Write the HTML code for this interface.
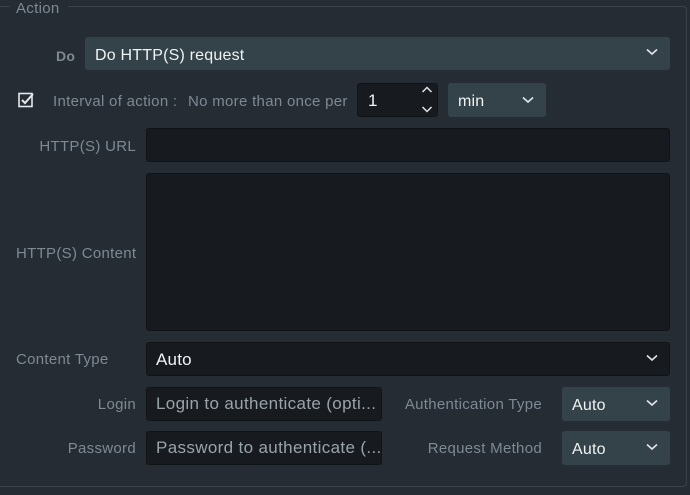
<!DOCTYPE html>
<html><head><meta charset="utf-8"><style>
body{margin:0;width:690px;height:495px;background:#262c33;font-family:"Liberation Sans",sans-serif;position:relative;overflow:hidden}
.a{position:absolute}
.lbl{position:absolute;color:#7d8993;font-size:15px;line-height:18px;white-space:nowrap;letter-spacing:0.3px;margin-top:1px}
.r{text-align:right}
.in{position:absolute;background:#171b1f;border:1px solid #111417;border-radius:3px;box-sizing:border-box}
.sel{position:absolute;background:#34434a;border-radius:3px;box-sizing:border-box}
.t{position:absolute;color:#f0f2f3;font-size:16px;line-height:20px;white-space:nowrap;letter-spacing:0.2px;margin-top:1px}
.ph{position:absolute;color:#9aa3aa;font-size:17px;line-height:20px;white-space:nowrap;letter-spacing:0.35px}
svg.chev{position:absolute}
</style></head><body>
<div class="a" style="left:0;top:6px;width:686px;height:479px;border:1px solid #39424a;border-left:none;border-radius:0 4px 4px 0"></div>
<div class="a" style="left:10px;top:0;width:58px;height:14px;background:#262c33"></div>
<div class="lbl" style="left:16px;top:-1px">Action</div>

<div class="lbl" style="left:56px;top:46px;font-weight:bold;font-size:14px">Do</div>
<div class="sel" style="left:85px;top:37px;width:585px;height:33px"></div>
<div class="t" style="left:95px;top:45px">Do HTTP(S) request</div>
<svg class="chev" style="left:646px;top:48px" width="12" height="8"><path d="M1 1.5L6 6L11 1.5" stroke="#e0e4e6" stroke-width="1.6" fill="none"/></svg>

<svg class="a" style="left:18px;top:92px" width="17" height="16"><rect x="1" y="1.5" width="13" height="13" stroke="#e6e9eb" stroke-width="1.6" fill="none"/><path d="M4 8L7 11L15 2" stroke="#e6e9eb" stroke-width="2" fill="none"/></svg>
<div class="lbl" style="left:53px;top:92px">Interval of action :</div>
<div class="lbl" style="left:188px;top:92px">No more than once per</div>
<div class="in" style="left:357px;top:83px;width:81px;height:34px"></div>
<div class="t" style="left:368px;top:90px;font-size:17px">1</div>
<svg class="a" style="left:421px;top:85px" width="12" height="30"><path d="M1.5 7L6 2.5L10.5 7M1.5 22L6 26.5L10.5 22" stroke="#e0e4e6" stroke-width="1.5" fill="none"/></svg>
<div class="sel" style="left:448px;top:83px;width:98px;height:34px"></div>
<div class="t" style="left:458px;top:91px">min</div>
<svg class="chev" style="left:522px;top:96px" width="12" height="8"><path d="M1 1.5L6 6L11 1.5" stroke="#e0e4e6" stroke-width="1.6" fill="none"/></svg>

<div class="lbl r" style="left:0;width:136px;top:137px">HTTP(S) URL</div>
<div class="in" style="left:146px;top:128px;width:524px;height:34px"></div>
<div class="lbl" style="left:16px;top:244px">HTTP(S) Content</div>
<div class="in" style="left:146px;top:173px;width:524px;height:158px"></div>

<div class="lbl" style="left:16px;top:350px">Content Type</div>
<div class="in" style="left:146px;top:342px;width:524px;height:34px"></div>
<div class="t" style="left:156px;top:349px;font-size:17px">Auto</div>
<svg class="chev" style="left:646px;top:354px" width="12" height="8"><path d="M1 1.5L6 6L11 1.5" stroke="#e0e4e6" stroke-width="1.6" fill="none"/></svg>

<div class="lbl r" style="left:0;width:136px;top:395px">Login</div>
<div class="in" style="left:146px;top:387px;width:236px;height:34px;overflow:hidden"><div class="ph" style="left:9px;top:6px">Login to authenticate (opti...</div></div>
<div class="lbl r" style="left:300px;width:242px;top:395px">Authentication Type</div>
<div class="sel" style="left:562px;top:387px;width:108px;height:34px"></div>
<div class="t" style="left:572px;top:395px">Auto</div>
<svg class="chev" style="left:646px;top:399px" width="12" height="8"><path d="M1 1.5L6 6L11 1.5" stroke="#e0e4e6" stroke-width="1.6" fill="none"/></svg>

<div class="lbl r" style="left:0;width:136px;top:439px">Password</div>
<div class="in" style="left:146px;top:431px;width:236px;height:34px;overflow:hidden"><div class="ph" style="left:9px;top:6px">Password to authenticate (...</div></div>
<div class="lbl r" style="left:300px;width:242px;top:439px">Request Method</div>
<div class="sel" style="left:562px;top:431px;width:108px;height:34px"></div>
<div class="t" style="left:572px;top:439px">Auto</div>
<svg class="chev" style="left:646px;top:443px" width="12" height="8"><path d="M1 1.5L6 6L11 1.5" stroke="#e0e4e6" stroke-width="1.6" fill="none"/></svg>
</body></html>
